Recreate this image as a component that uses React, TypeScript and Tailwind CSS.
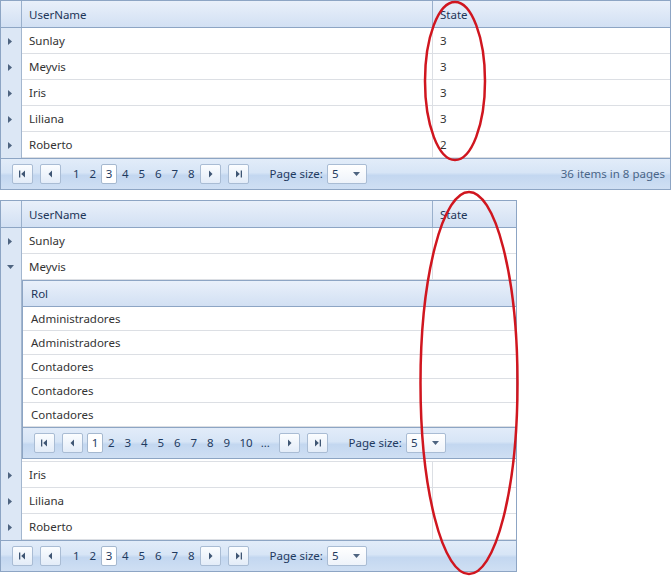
import React from "react";

const font = { fontFamily: '"Segoe UI", "Noto Sans", "Open Sans", sans-serif' };

function Tri({ dir }: { dir: "right" | "down" }) {
  if (dir === "down")
    return (
      <svg width="7" height="4" viewBox="0 0 7 4">
        <path d="M0 0 L7 0 L3.5 4 Z" fill="#4e6480" />
      </svg>
    );
  return (
    <svg width="4" height="7" viewBox="0 0 4 7">
      <path d="M0 0 L4 3.5 L0 7 Z" fill="#4e6480" />
    </svg>
  );
}

function NavButton({ kind }: { kind: "first" | "prev" | "next" | "last" }) {
  return (
    <div className="flex h-[20px] w-[21px] items-center justify-center rounded-[2px] border border-[#a9bcd4] bg-[linear-gradient(to_bottom,#fbfdff,#e3ecf8)]">
      <svg width="9" height="8" viewBox="0 0 9 8">
        {kind === "first" && (
          <>
            <rect x="1" y="0.5" width="1.3" height="7" fill="#3f5674" />
            <path d="M7 0.5 L7 7.5 L3.2 4 Z" fill="#3f5674" />
          </>
        )}
        {kind === "prev" && <path d="M6 0.5 L6 7.5 L2.5 4 Z" fill="#3f5674" />}
        {kind === "next" && <path d="M3 0.5 L3 7.5 L6.5 4 Z" fill="#3f5674" />}
        {kind === "last" && (
          <>
            <path d="M2 0.5 L2 7.5 L5.8 4 Z" fill="#3f5674" />
            <rect x="6.7" y="0.5" width="1.3" height="7" fill="#3f5674" />
          </>
        )}
      </svg>
    </div>
  );
}

function Pager({
  pages,
  current,
  more,
  info,
}: {
  pages: string[];
  current: string;
  more?: boolean;
  info?: string;
}) {
  return (
    <div className="flex h-[31px] items-center border-t border-[#8da5c4] bg-[linear-gradient(to_bottom,#e2ecf9_0%,#d7e5f6_45%,#c3d7f0_55%,#cfdff3_100%)] pl-[11px] pr-[5px] text-[11.5px] text-[#1e3a5f]">
      <NavButton kind="first" />
      <div className="ml-[7px]">
        <NavButton kind="prev" />
      </div>
      <div className={`flex items-center ${more ? "ml-[4px]" : "ml-[7px]"}`}>
        {pages.map((p) =>
          p === current ? (
            <div
              key={p}
              className="flex h-[20px] w-[16px] items-center justify-center rounded-[2px] border border-[#a5b8cf] bg-white"
            >
              {p}
            </div>
          ) : (
            <div
              key={p}
              className={`flex h-[20px] items-center justify-center ${p.length > 1 ? "w-[22px]" : "w-[16.5px]"}`}
            >
              {p}
            </div>
          ),
        )}
        {more && <div className="flex h-[20px] w-[16.5px] items-center justify-center">...</div>}
      </div>
      <div className={more ? "ml-[5px]" : ""}>
        <NavButton kind="next" />
      </div>
      <div className="ml-[7px]">
        <NavButton kind="last" />
      </div>
      <span className="ml-[21px]">Page size:</span>
      <div className="ml-[4px] flex h-[20px] w-[40px] items-center justify-between rounded-[2px] border border-[#a9bcd4] bg-[linear-gradient(to_bottom,#ffffff,#eef3fa)] pl-[4px] pr-[6px]">
        <span>5</span>
        <Tri dir="down" />
      </div>
      {info && <span className="ml-auto text-[#4a6587]">{info}</span>}
    </div>
  );
}

function Indicator({ dir }: { dir?: "right" | "down" }) {
  return (
    <div className="flex w-[21px] shrink-0 items-center self-stretch border-r border-[#a3b6ce] bg-[#dce7f5] pl-[7px]">
      {dir === "right" && <Tri dir="right" />}
      {dir === "down" && (
        <div className="-ml-[1px]">
          <Tri dir="down" />
        </div>
      )}
    </div>
  );
}

function Header() {
  return (
    <div className="flex h-[27px] border-b border-[#8da5c4] bg-[linear-gradient(to_bottom,#e9f0fa,#d2e0f3)] text-[11.5px] text-[#1d3557]">
      <div className="w-[21px] shrink-0 border-r border-[#9ab0cc]" />
      <div className="flex w-[411px] shrink-0 items-center border-r border-[#9ab0cc] pl-[7px] pt-[2px]">UserName</div>
      <div className="flex flex-1 items-center pl-[7px] pt-[2px]">State</div>
    </div>
  );
}

function Row({ name, state, dir = "right" }: { name: string; state: string; dir?: "right" | "down" }) {
  return (
    <div className="flex h-[26px] text-[11.5px] text-[#333333]">
      <Indicator dir={dir} />
      <div className="flex flex-1 border-b border-[#dcdfe4]">
        <div className="flex w-[411px] shrink-0 items-center border-r border-[#dcdfe4] pl-[7px] pt-[1px]">{name}</div>
        <div className="flex flex-1 items-center pl-[7px] pt-[1px]">{state}</div>
      </div>
    </div>
  );
}

function DetailRow() {
  const roles = ["Administradores", "Administradores", "Contadores", "Contadores", "Contadores"];
  return (
    <div className="flex h-[182px] text-[11.5px] text-[#333333]">
      <Indicator />
      <div className="flex flex-1 flex-col border-b border-[#dcdfe4] pb-[2px]">
        <div className="flex flex-col border-y border-l border-[#8da5c4]">
          <div className="flex h-[26px] items-center border-b border-[#8da5c4] bg-[linear-gradient(to_bottom,#e9f0fa,#d2e0f3)] pl-[8px] pt-[1px] text-[#1d3557]">
            Rol
          </div>
          {roles.map((r, i) => (
            <div key={i} className="flex h-[24px] items-center border-b border-[#dcdfe4] pl-[8px] pt-[1px] last:border-b-0">
              {r}
            </div>
          ))}
          <Pager pages={["1", "2", "3", "4", "5", "6", "7", "8", "9", "10"]} current="1" more />
        </div>
      </div>
    </div>
  );
}

export default function App() {
  return (
    <div className="relative h-[583px] w-[671px] overflow-hidden bg-white" style={font}>
      <div className="w-[671px] border border-[#8da5c4]">
        <Header />
        <Row name="Sunlay" state="3" />
        <Row name="Meyvis" state="3" />
        <Row name="Iris" state="3" />
        <Row name="Liliana" state="3" />
        <Row name="Roberto" state="2" />
        <Pager
          pages={["1", "2", "3", "4", "5", "6", "7", "8"]}
          current="3"
          info="36 items in 8 pages"
        />
      </div>
      <div className="h-[10px]" />
      <div className="w-[517px] border border-[#8da5c4]">
        <Header />
        <Row name="Sunlay" state="" />
        <Row name="Meyvis" state="" dir="down" />
        <DetailRow />
        <Row name="Iris" state="" />
        <Row name="Liliana" state="" />
        <Row name="Roberto" state="" />
        <Pager pages={["1", "2", "3", "4", "5", "6", "7", "8"]} current="3" />
      </div>
      <svg className="pointer-events-none absolute left-0 top-0" width="671" height="583" viewBox="0 0 671 583">
        <ellipse cx="455" cy="81" rx="30" ry="79" fill="none" stroke="#d0161f" strokeWidth="2.5" />
        <ellipse cx="469" cy="383" rx="48.5" ry="191" fill="none" stroke="#d0161f" strokeWidth="2.5" />
      </svg>
    </div>
  );
}
